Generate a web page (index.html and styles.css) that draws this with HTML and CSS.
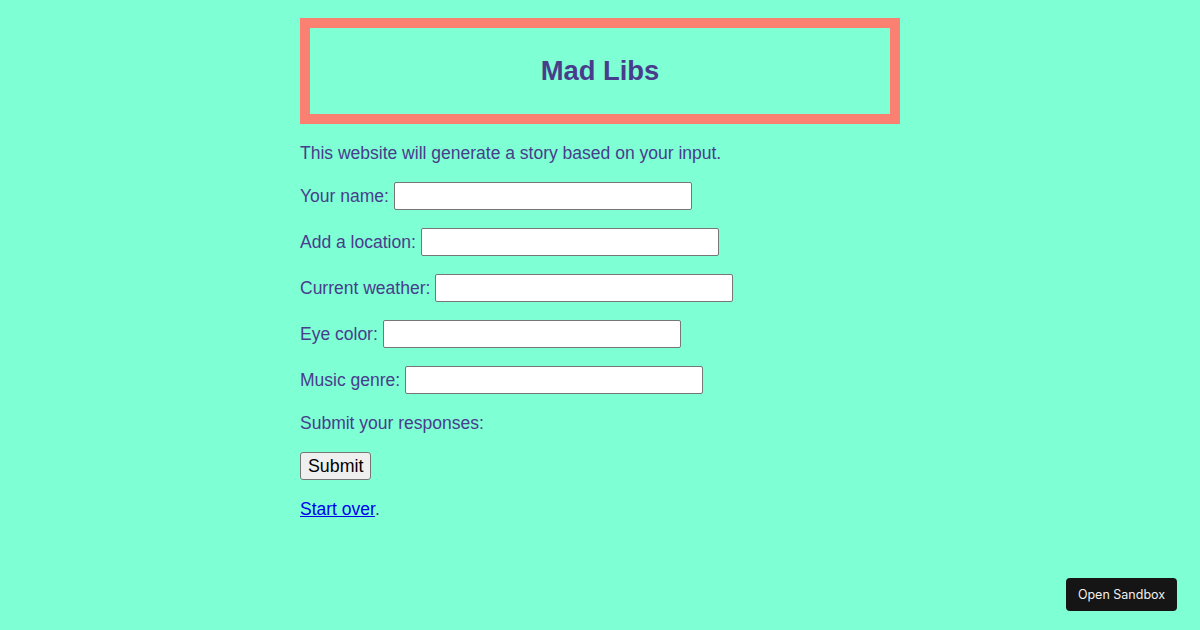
FILE: index.html
```html
<!DOCTYPE html>
<html lang="en">
    <head>
        <meta charset="utf-8">
        <title>Mad Libs</title>
        <link rel="stylesheet" href="styles.css">
    </head>
    <body>
        <div class="page">
            <div class="banner">
                <h1>Mad Libs</h1>
            </div>
            <p class="line">This website will generate a story based on your input.</p>
            <form class="story-form">
                <div class="field"><label for="name">Your name:</label><input id="name" type="text"></div>
                <div class="field"><label for="place">Add a location:</label><input id="place" type="text"></div>
                <div class="field"><label for="weather">Current weather:</label><input id="weather" type="text"></div>
                <div class="field"><label for="eyes">Eye color:</label><input id="eyes" type="text"></div>
                <div class="field"><label for="music">Music genre:</label><input id="music" type="text"></div>
                <p class="line">Submit your responses:</p>
                <div class="field"><button type="button" class="submit">Submit</button></div>
            </form>
            <p class="line"><a href="#">Start over</a>.</p>
        </div>
        <a class="sandbox" href="#">Open Sandbox</a>
    </body>
</html>
```

FILE: styles.css
```css
body {
    margin: 0;
    background-color: aquamarine;
    color: darkslateblue;
    font-family: "Liberation Sans", Arial, sans-serif;
    font-size: 17.5px;
}

.page {
    width: 600px;
    margin: 0 auto;
    padding-top: 18px;
    display: flex;
    flex-direction: column;
    gap: 18px;
}

.banner {
    height: 106px;
    box-sizing: border-box;
    border: 10px solid salmon;
    display: flex;
    align-items: center;
    justify-content: center;
}

.banner h1 {
    margin: 0;
    font-size: 27.4px;
    font-weight: bold;
}

.story-form {
    display: flex;
    flex-direction: column;
    gap: 18px;
}

.line {
    margin: 0;
    line-height: 22px;
}

.field {
    height: 28px;
    display: flex;
    align-items: center;
    gap: 5px;
}

.field input {
    width: 298px;
    height: 28px;
    box-sizing: border-box;
    border: 1px solid #767676;
    border-radius: 2px;
    background: #fff;
    padding: 1px 2px;
    margin: 0;
}

.submit {
    height: 28px;
    margin: 0;
    padding: 1px 7px;
    font-family: "Liberation Sans", Arial, sans-serif;
    font-size: 17.8px;
    color: #000;
    background: #efefef;
    border: 1px solid #767676;
    border-radius: 3px;
}

a {
    color: #0000ee;
}

.sandbox {
    position: fixed;
    right: 23px;
    bottom: 19px;
    width: 111px;
    height: 33px;
    box-sizing: border-box;
    display: flex;
    align-items: center;
    justify-content: center;
    background: #151515;
    color: #f0f0f0;
    border-radius: 4px;
    font-family: Inter, sans-serif;
    font-size: 12.5px;
    text-decoration: none;
}
```
